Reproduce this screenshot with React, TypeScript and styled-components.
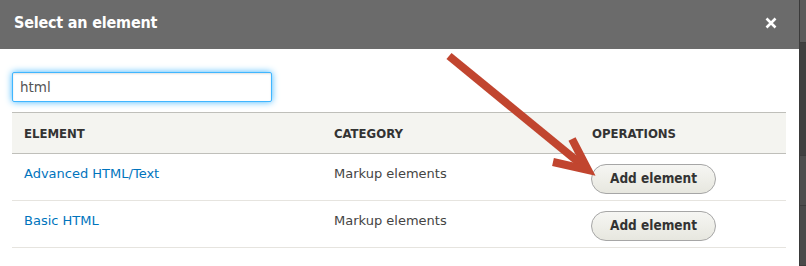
import React from "react";
import styled, { createGlobalStyle } from "styled-components";

const Global = createGlobalStyle`
  html, body { margin: 0; padding: 0; background: #4a4a4a; }
  body { font-family: "DejaVu Sans", "Liberation Sans", sans-serif; }
  * { box-sizing: border-box; }
`;

const Page = styled.div`
  position: relative;
  width: 806px;
  height: 266px;
  display: flex;
  overflow: hidden;
`;

const Dialog = styled.div`
  width: 799px;
  height: 266px;
  background: #fff;
  display: flex;
  flex-direction: column;
`;

const SideStrip = styled.div`
  flex: 1;
  display: flex;
  flex-direction: column;
  border-left: 1px solid #3a3a3a;
`;

const StripBand = styled.div<{ $h: number; $c: string }>`
  height: ${(p) => p.$h}px;
  background: ${(p) => p.$c};
  border-bottom: 1px solid #3c3c3c;
  flex: ${(p) => (p.$h === 0 ? 1 : "none")};
`;

const TitleBar = styled.div`
  height: 49px;
  background: #6b6b6b;
  display: flex;
  align-items: center;
  justify-content: space-between;
  padding: 0 22px 4px 14px;
`;

const Title = styled.h1`
  margin: 0;
  color: #fff;
  font-family: "DejaVu Sans Condensed", "DejaVu Sans", sans-serif;
  font-weight: bold;
  font-size: 16px;
  letter-spacing: -0.2px;
`;

const Close = styled.button`
  border: 0;
  background: transparent;
  padding: 0;
  width: 12px;
  height: 12px;
  display: flex;
  cursor: pointer;
`;

const Body = styled.div`
  padding: 23px 12px 0 12px;
  display: flex;
  flex-direction: column;
  gap: 10px;
`;

const Search = styled.input`
  width: 260px;
  height: 30px;
  border: 1px solid #40b6ff;
  border-radius: 2px;
  box-shadow: inset 0 1px 2px rgba(0, 0, 0, 0.125), 0 0 7px #40b6ff;
  padding: 0 7px;
  font-family: "DejaVu Sans", sans-serif;
  font-size: 13.5px;
  color: #555;
  outline: none;
`;

const Table = styled.table`
  width: 774px;
  border-collapse: collapse;
  table-layout: fixed;
`;

const HeadRow = styled.tr`
  background: #f4f4f0;
  border-top: 1px solid #bfbfba;
  border-bottom: 1px solid #bfbfba;
`;

const Th = styled.th<{ $w: number }>`
  width: ${(p) => p.$w}px;
  height: 41px;
  padding: 0 12px;
  text-align: left;
  text-transform: uppercase;
  font-size: 13px;
  font-weight: bold;
  color: #333;
  font-family: "DejaVu Sans Condensed", "DejaVu Sans", sans-serif;
`;

const Row = styled.tr`
  border-bottom: 1px solid #e6e4df;
`;

const Td = styled.td`
  padding: 10px 12px 6px;
  vertical-align: top;
  font-size: 13px;
  line-height: 20px;
  color: #444;
  height: 46px;
`;

const Link = styled.a`
  color: #0074bd;
  text-decoration: none;
`;

const Button = styled.button`
  height: 30px;
  width: 125px;
  margin-left: -1px;
  border: 1px solid #a6a6a6;
  border-radius: 20px;
  background: linear-gradient(to bottom, #f6f6f3, #e7e7df);
  color: #333;
  font-family: "DejaVu Sans Condensed", "DejaVu Sans", sans-serif;
  font-weight: bold;
  font-size: 13.5px;
  padding: 0 0 2px;
  cursor: pointer;
`;

const Arrow = styled.svg`
  position: absolute;
  left: 0;
  top: 0;
  pointer-events: none;
`;

const rows = [
  { name: "Advanced HTML/Text", cat: "Markup elements" },
  { name: "Basic HTML", cat: "Markup elements" },
];

export default function App() {
  return (
    <>
      <Global />
      <Page>
        <Dialog>
          <TitleBar>
            <Title>Select an element</Title>
            <Close aria-label="Close">
              <svg width="12" height="12" viewBox="0 0 12 12">
                <path d="M1.5 1.5 L10.5 10.5 M10.5 1.5 L1.5 10.5" stroke="#fff" strokeWidth="2.6" />
              </svg>
            </Close>
          </TitleBar>
          <Body>
            <Search defaultValue="html" />
            <Table>
              <thead>
                <HeadRow>
                  <Th $w={310}>Element</Th>
                  <Th $w={258}>Category</Th>
                  <Th $w={206}>Operations</Th>
                </HeadRow>
              </thead>
              <tbody>
                {rows.map((r) => (
                  <Row key={r.name}>
                    <Td>
                      <Link href="#">{r.name}</Link>
                    </Td>
                    <Td>{r.cat}</Td>
                    <Td>
                      <Button>Add element</Button>
                    </Td>
                  </Row>
                ))}
              </tbody>
            </Table>
          </Body>
        </Dialog>
        <SideStrip>
          <StripBand $h={43} $c="#5b5b5b" />
          <StripBand $h={113} $c="#404040" />
          <StripBand $h={50} $c="#4d4d4d" />
          <StripBand $h={0} $c="#4a4a4a" />
        </SideStrip>
        <Arrow width="806" height="266" viewBox="0 0 806 266">
          <g stroke="#c1452f" strokeWidth="8" fill="none">
            <line x1="449" y1="56" x2="582" y2="165" />
            <polyline points="572,139 588,170 553,162" strokeLinejoin="miter" />
          </g>
        </Arrow>
      </Page>
    </>
  );
}
